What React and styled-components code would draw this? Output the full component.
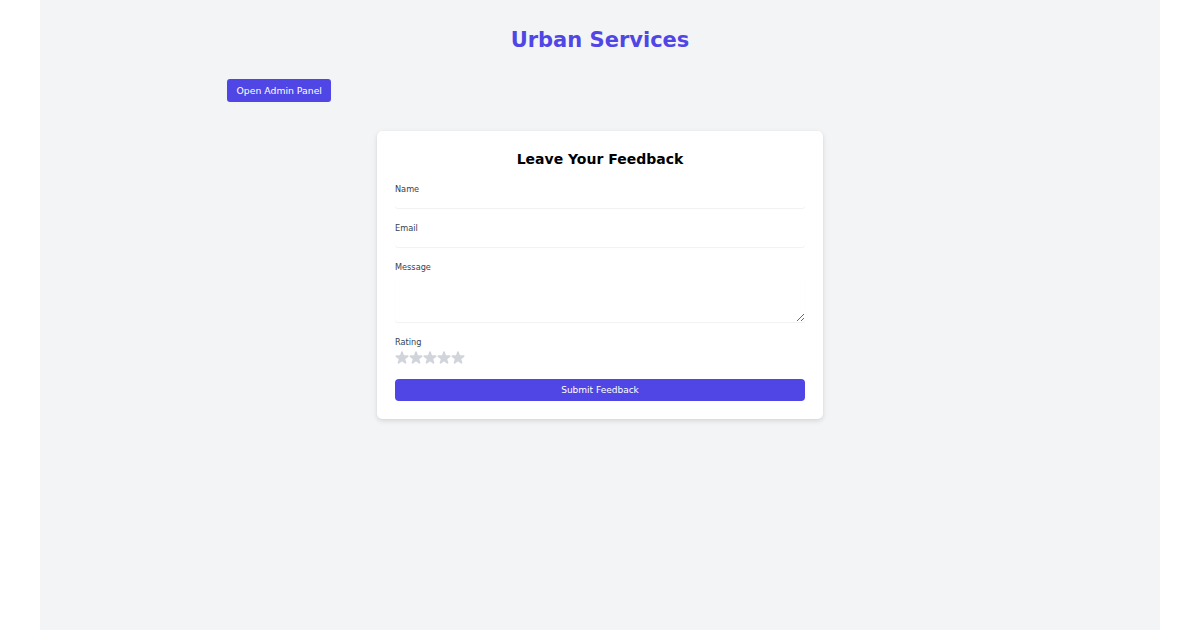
import React, { useState } from "react";
import styled, { createGlobalStyle } from "styled-components";

const GlobalStyle = createGlobalStyle`
  html, body {
    margin: 0;
    padding: 0;
    background: #ffffff;
    font-family: "DejaVu Sans", "Liberation Sans", sans-serif;
  }
`;

const Page = styled.div`
  width: 1120px;
  min-height: 630px;
  margin: 0 auto;
  background: #f3f4f6;
  padding-top: 26px;
  box-sizing: border-box;
  display: flex;
  flex-direction: column;
  align-items: center;
`;

const Title = styled.h1`
  margin: 0;
  font-size: 21px;
  line-height: 28px;
  font-weight: 700;
  color: #4f46e5;
`;

const Toolbar = styled.div`
  width: 746px;
  margin-top: 25px;
  display: flex;
`;

const Button = styled.button`
  border: none;
  border-radius: 3px;
  background: #4f46e5;
  color: #ffffff;
  font-family: inherit;
  font-size: 9.3px;
  height: 23px;
  padding: 0 9.5px;
  cursor: pointer;
  width: ${(p) => (p.$block ? "100%" : "auto")};
  ${(p) => p.$block && "height: 22px; font-size: 9px; border-radius: 4px;"}
`;

const Card = styled.form`
  width: 446px;
  margin-top: 29px;
  background: #ffffff;
  border-radius: 5px;
  padding: 18px;
  box-sizing: border-box;
  box-shadow: 0 2px 5px rgba(0, 0, 0, 0.12), 0 0 1px rgba(0, 0, 0, 0.08);
  display: flex;
  flex-direction: column;
`;

const CardTitle = styled.h2`
  margin: 0 0 15px;
  text-align: center;
  font-size: 14px;
  line-height: 20px;
  font-weight: 700;
  color: #000000;
`;

const Field = styled.div`
  display: flex;
  flex-direction: column;
  margin-bottom: ${(p) => (p.$tight ? "14px" : "15px")};
`;

const Label = styled.label`
  font-size: 8.2px;
  line-height: 10px;
  color: #374151;
  margin-bottom: 1px;
`;

const Input = styled.input`
  height: 13px;
  border: none;
  border-radius: 3px;
  box-shadow: 0 1px 1px rgba(0, 0, 0, 0.06);
  outline: none;
  padding: 0 4px;
  font-size: 9px;
  font-family: inherit;
`;

const TextArea = styled.textarea`
  height: 49px;
  border: none;
  border-radius: 3px;
  box-shadow: 0 1px 1px rgba(0, 0, 0, 0.06);
  outline: none;
  padding: 2px 4px;
  box-sizing: border-box;
  font-size: 9px;
  font-family: inherit;
`;

const Stars = styled.div`
  display: flex;
  margin-top: 3px;
`;

const Star = styled.svg`
  width: 14px;
  height: 14px;
  cursor: pointer;
  fill: ${(p) => (p.$on ? "#facc15" : "#d1d5db")};
`;

export default function App() {
  const [rating, setRating] = useState(0);

  return (
    <>
      <GlobalStyle />
      <Page>
        <Title>Urban Services</Title>
        <Toolbar>
          <Button type="button">Open Admin Panel</Button>
        </Toolbar>
        <Card onSubmit={(e) => e.preventDefault()}>
          <CardTitle>Leave Your Feedback</CardTitle>
          <Field>
            <Label>Name</Label>
            <Input type="text" />
          </Field>
          <Field>
            <Label>Email</Label>
            <Input type="email" />
          </Field>
          <Field>
            <Label>Message</Label>
            <TextArea />
          </Field>
          <Field $tight>
            <Label>Rating</Label>
            <Stars>
              {[1, 2, 3, 4, 5].map((n) => (
                <Star key={n} viewBox="2 2 16 16" $on={n <= rating} onClick={() => setRating(n)}>
                  <path d="M9.05 2.93c.3-.92 1.6-.92 1.9 0l1.07 3.29a1 1 0 0 0 .95.69h3.46c.97 0 1.37 1.24.59 1.81l-2.8 2.03a1 1 0 0 0-.36 1.12l1.07 3.29c.3.92-.76 1.69-1.54 1.12l-2.8-2.03a1 1 0 0 0-1.18 0l-2.8 2.03c-.78.57-1.83-.2-1.54-1.12l1.07-3.29a1 1 0 0 0-.36-1.12L2.98 8.72c-.78-.57-.38-1.81.59-1.81h3.46a1 1 0 0 0 .95-.69l1.07-3.29z" />
                </Star>
              ))}
            </Stars>
          </Field>
          <Button type="submit" $block>Submit Feedback</Button>
        </Card>
      </Page>
    </>
  );
}
